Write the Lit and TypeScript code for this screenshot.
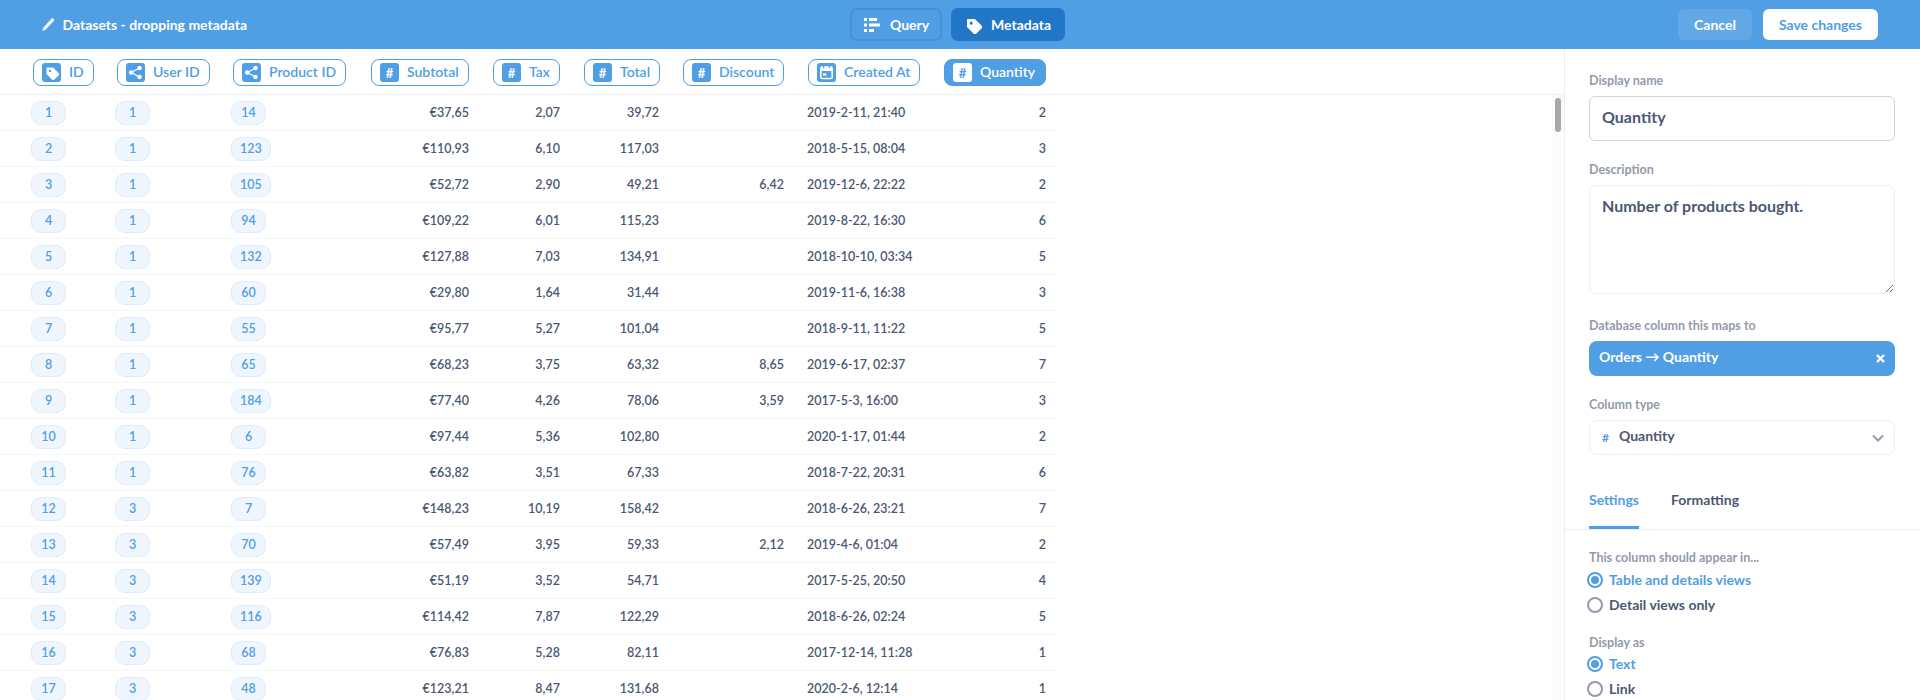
import { LitElement, html, css, svg } from "lit";
import { customElement } from "lit/decorators.js";

type Kind = "tag" | "fk" | "num" | "cal";
const COLS: { name: string; kind: Kind; active?: boolean }[] = [
  { name: "ID", kind: "tag" },
  { name: "User ID", kind: "fk" },
  { name: "Product ID", kind: "fk" },
  { name: "Subtotal", kind: "num" },
  { name: "Tax", kind: "num" },
  { name: "Total", kind: "num" },
  { name: "Discount", kind: "num" },
  { name: "Created At", kind: "cal" },
  { name: "Quantity", kind: "num", active: true },
];

const ROWS: string[][] = [
  ["1", "1", "14", "€37,65", "2,07", "39,72", "", "2019-2-11, 21:40", "2"],
  ["2", "1", "123", "€110,93", "6,10", "117,03", "", "2018-5-15, 08:04", "3"],
  ["3", "1", "105", "€52,72", "2,90", "49,21", "6,42", "2019-12-6, 22:22", "2"],
  ["4", "1", "94", "€109,22", "6,01", "115,23", "", "2019-8-22, 16:30", "6"],
  ["5", "1", "132", "€127,88", "7,03", "134,91", "", "2018-10-10, 03:34", "5"],
  ["6", "1", "60", "€29,80", "1,64", "31,44", "", "2019-11-6, 16:38", "3"],
  ["7", "1", "55", "€95,77", "5,27", "101,04", "", "2018-9-11, 11:22", "5"],
  ["8", "1", "65", "€68,23", "3,75", "63,32", "8,65", "2019-6-17, 02:37", "7"],
  ["9", "1", "184", "€77,40", "4,26", "78,06", "3,59", "2017-5-3, 16:00", "3"],
  ["10", "1", "6", "€97,44", "5,36", "102,80", "", "2020-1-17, 01:44", "2"],
  ["11", "1", "76", "€63,82", "3,51", "67,33", "", "2018-7-22, 20:31", "6"],
  ["12", "3", "7", "€148,23", "10,19", "158,42", "", "2018-6-26, 23:21", "7"],
  ["13", "3", "70", "€57,49", "3,95", "59,33", "2,12", "2019-4-6, 01:04", "2"],
  ["14", "3", "139", "€51,19", "3,52", "54,71", "", "2017-5-25, 20:50", "4"],
  ["15", "3", "116", "€114,42", "7,87", "122,29", "", "2018-6-26, 02:24", "5"],
  ["16", "3", "68", "€76,83", "5,28", "82,11", "", "2017-12-14, 11:28", "1"],
  ["17", "3", "48", "€123,21", "8,47", "131,68", "", "2020-2-6, 12:14", "1"],
];

const tagPath = svg`<g transform="rotate(-45 8 8)"><path fill-rule="evenodd" d="M8 .6 13 5.4V14a1.5 1.5 0 0 1-1.5 1.5h-7A1.5 1.5 0 0 1 3 14V5.4zM8 4.4a1.3 1.3 0 1 0 0 2.6 1.3 1.3 0 0 0 0-2.6z"/></g>`;

@customElement("app-root")
export class AppRoot extends LitElement {
  static styles = css`
    :host {
      display: flex;
      flex-direction: column;
      width: 1920px;
      height: 700px;
      overflow: hidden;
      background: #fff;
      font-family: Lato, "Noto Sans", sans-serif;
      font-weight: 700;
      color: #4c5773;
    }
    .nav {
      flex: none;
      height: 49px;
      background: #509ee3;
      color: #fff;
      display: grid;
      grid-template-columns: 850px 215px 1fr;
      align-items: center;
      font-size: 14px;
    }
    .title {
      display: flex;
      align-items: center;
      gap: 8px;
      padding-left: 42px;
    }
    .title svg { width: 12.5px; height: 13px; fill: #fff; display: block; }
    .switch { display: flex; gap: 9px; }
    .mode {
      height: 33px;
      box-sizing: border-box;
      border-radius: 7px;
      display: flex;
      align-items: center;
      font-size: 14px;
    }
    .mode svg { display: block; fill: #fff; }
    .mode.query {
      width: 92px;
      border: 2px solid #4a90d4;
      padding-left: 12px;
      gap: 10px;
    }
    .mode.query svg { width: 16px; height: 14px; }
    .mode.meta {
      width: 114px;
      background: #2177c6;
      padding-left: 13px;
      gap: 9px;
    }
    .mode.meta svg { width: 18px; height: 18px; }
    .actions {
      display: flex;
      justify-content: flex-end;
      gap: 11px;
      padding-right: 42px;
    }
    .btn {
      height: 31px;
      border-radius: 6px;
      padding: 0 16px;
      font-size: 14px;
      display: flex;
      align-items: center;
    }
    .btn.cancel { background: #62a8e6; color: #fff; }
    .btn.save { background: #fff; color: #509ee3; }

    .main { flex: 1; display: flex; min-height: 0; }
    .data {
      flex: 1;
      display: flex;
      flex-direction: column;
      min-width: 0;
    }
    .cols {
      flex: none;
      height: 46px;
      box-sizing: border-box;
      border-bottom: 1px solid #eeeeee;
      padding-top: 10px;
    }
    .grid {
      display: grid;
      grid-template-columns: 60px 92px 114px 98px 67px 75px 101px 112px 102px;
      column-gap: 24px;
      padding: 0 10px 0 33px;
      width: 1056px;
      box-sizing: border-box;
    }
    .hcol {
      justify-self: start;
      height: 27px;
      box-sizing: border-box;
      border: 1px solid #509ee3;
      border-radius: 8px;
      padding: 0 9px 0 8px;
      display: flex;
      align-items: center;
      gap: 8px;
      color: #509ee3;
      font-size: 14px;
      font-weight: 600;
      white-space: nowrap;
    }
    .hcol span:last-child { margin-top: -2px; }
    .hcol.on { background: #509ee3; color: #fff; width: 102px; }
    .ico {
      flex: none;
      width: 19px;
      height: 19px;
      border-radius: 3px;
      background: #509ee3;
      color: #fff;
      display: flex;
      align-items: center;
      justify-content: center;
      font-size: 13px;
      font-weight: 700;
      margin: 0 !important;
    }
    .on .ico { background: #fff; color: #509ee3; }
    .ico svg { width: 15px; height: 15px; fill: #fff; display: block; }
    .ico svg.full { width: 19px; height: 19px; }
    .body { flex: 1; display: flex; min-height: 0; }
    .rows { flex: 1; min-width: 0; overflow: hidden; }
    .row {
      height: 36px;
      box-sizing: border-box;
      border-bottom: 1px solid #f6f6f6;
      align-items: center;
      font-size: 12.5px;
      font-weight: 600;
      white-space: nowrap;
    }
    .r { text-align: right; }
    .d { margin-left: -1px; }
    .pk {
      justify-self: start;
      margin-left: -2px;
      height: 24px;
      min-width: 35px;
      box-sizing: border-box;
      padding: 0 8px;
      border: 1px solid #dfebf8;
      border-radius: 10px;
      background: #f0f6fd;
      color: #509ee3;
      display: flex;
      align-items: center;
      justify-content: center;
    }
    .track {
      flex: none;
      width: 12px;
      background: #fbfbfb;
      padding: 3px 3px 0;
      box-sizing: border-box;
    }
    .thumb {
      width: 6px;
      height: 34px;
      border-radius: 3px;
      background: #a8a8a8;
    }

    .side {
      flex: none;
      width: 356px;
      box-sizing: border-box;
      border-left: 1px solid #eeeeee;
      padding: 23px 25px 0 24px;
      overflow: hidden;
      font-size: 14px;
    }
    .lab {
      display: block;
      height: 16px;
      box-sizing: border-box;
      padding-top: 1px;
      line-height: 16px;
      font-size: 12.5px;
      color: #949aab;
      margin-bottom: 8px;
    }
    input, textarea {
      display: block;
      width: 100%;
      box-sizing: border-box;
      font: inherit;
      font-size: 16px;
      color: #4c5773;
      background: #fff;
      border-radius: 6px;
      outline: none;
      margin: 0;
    }
    input {
      height: 45px;
      border: 1px solid #d2d4d9;
      padding: 0 12px 5px;
    }
    textarea {
      height: 109px;
      border: 1px solid #eeeeee;
      padding: 10px 12px;
      resize: vertical;
    }
    .chip {
      height: 35px;
      box-sizing: border-box;
      border-radius: 8px;
      background: #509ee3;
      color: #fff;
      padding: 0 10px 4px 10px;
      display: flex;
      align-items: center;
      justify-content: space-between;
    }
    .chip svg { width: 9px; height: 9px; stroke: #fff; stroke-width: 2.4; display: block; margin-top: 4px; }
    .select {
      height: 35px;
      box-sizing: border-box;
      border: 1px solid #eeeeee;
      border-radius: 8px;
      padding: 0 10px 4px 12px;
      display: flex;
      align-items: center;
      gap: 8px;
    }
    .select .h { color: #509ee3; font-size: 12px; width: 9px; margin-top: 4px; }
    .select svg { margin-left: auto; margin-top: 4px; width: 12px; height: 8px; fill: none; stroke: #949aab; stroke-width: 2; display: block; }
    .mt20 { margin-top: 20px; }
    .mt23 { margin-top: 23px; }
    .tabs {
      margin: 35px -25px 0 -24px;
      padding: 0 25px 0 24px;
      height: 40px;
      box-sizing: border-box;
      border-bottom: 1px solid #eeeeee;
      display: flex;
      gap: 32px;
    }
    .tab { height: 39px; line-height: 20px; box-sizing: border-box; }
    .tab.on { color: #509ee3; border-bottom: 3px solid #509ee3; }
    .radio {
      display: flex;
      align-items: center;
      gap: 6px;
      height: 20px;
      margin: 5px 0 0 -2px;
    }
    .radio span:last-child { margin-top: -2px; }
    .dot {
      flex: none;
      width: 16px;
      height: 16px;
      box-sizing: border-box;
      border: 2px solid #949aab;
      border-radius: 50%;
      display: flex;
      align-items: center;
      justify-content: center;
      margin-top: -1px;
    }
    .radio.on { color: #509ee3; }
    .radio.on .dot { border-color: #509ee3; }
    .radio.on .dot::after {
      content: "";
      width: 8px;
      height: 8px;
      border-radius: 50%;
      background: #509ee3;
    }
    .l1 { margin-top: 19px; margin-bottom: 1px; }
    .l2 { margin-top: 19px; margin-bottom: -1px; }
  `;

  private icon(kind: Kind) {
    if (kind === "num") return html`<span class="ico">#</span>`;
    if (kind === "tag")
      return html`<span class="ico"><svg viewBox="0 0 16 16">${tagPath}</svg></span>`;
    if (kind === "fk")
      return html`<span class="ico"><svg viewBox="0 0 16 16">
        <circle cx="12.3" cy="3.2" r="2.4"></circle>
        <circle cx="3.4" cy="8" r="2.4"></circle>
        <circle cx="12.3" cy="12.8" r="2.4"></circle>
        <path d="M12.3 3.2 3.4 8l8.9 4.8" fill="none" stroke="#fff" stroke-width="1.2"></path>
      </svg></span>`;
    return html`<span class="ico"><svg class="full" viewBox="0 0 19 19">
      <rect x="3" y="3.2" width="13" height="13" rx="2.2"></rect>
      <rect x="4.6" y="8" width="9.8" height="6.8" fill="#509ee3"></rect>
      <rect x="6" y="10.4" width="3.4" height="2.2"></rect>
      <rect x="6" y="2.4" width="1.2" height="2.6" fill="#509ee3"></rect>
      <rect x="11.8" y="2.4" width="1.2" height="2.6" fill="#509ee3"></rect>
    </svg></span>`;
  }

  render() {
    return html`
      <div class="nav">
        <div class="title">
          <svg viewBox="0 0 12 13"><path d="M9.4.4a1 1 0 0 1 1.4 0l.9.9a1 1 0 0 1 0 1.4L3.4 11.5 0 13l1.2-3.6z"></path></svg>
          <span>Datasets - dropping metadata</span>
        </div>
        <div class="switch">
          <div class="mode query">
            <svg viewBox="0 0 16 14">
              <rect width="3" height="3"></rect><rect x="5" width="8" height="3"></rect>
              <rect y="5.5" width="3" height="3"></rect><rect x="5" y="5.5" width="11" height="3"></rect>
              <rect y="11" width="3" height="3"></rect><rect x="5" y="11" width="5" height="3"></rect>
            </svg>
            <span>Query</span>
          </div>
          <div class="mode meta">
            <svg viewBox="0 0 16 16">${tagPath}</svg>
            <span>Metadata</span>
          </div>
        </div>
        <div class="actions">
          <div class="btn cancel">Cancel</div>
          <div class="btn save">Save changes</div>
        </div>
      </div>
      <div class="main">
        <div class="data">
          <div class="cols">
            <div class="grid">
              ${COLS.map(
                (c) => html`<div class="hcol ${c.active ? "on" : ""}">${this.icon(c.kind)}<span>${c.name}</span></div>`
              )}
            </div>
          </div>
          <div class="body">
            <div class="rows">
              ${ROWS.map(
                (r) => html`<div class="row grid">
                  <div class="pk">${r[0]}</div>
                  <div class="pk">${r[1]}</div>
                  <div class="pk">${r[2]}</div>
                  <div class="r">${r[3]}</div>
                  <div class="r">${r[4]}</div>
                  <div class="r">${r[5]}</div>
                  <div class="r">${r[6]}</div>
                  <div class="d">${r[7]}</div>
                  <div class="r">${r[8]}</div>
                </div>`
              )}
            </div>
            <div class="track"><div class="thumb"></div></div>
          </div>
        </div>
        <div class="side">
          <label class="lab">Display name</label>
          <input value="Quantity" />
          <label class="lab mt20">Description</label>
          <textarea .value=${"Number of products bought."}></textarea>
          <label class="lab mt23">Database column this maps to</label>
          <div class="chip">
            <span>Orders → Quantity</span>
            <svg viewBox="0 0 9 9"><path d="M1 1l7 7M8 1 1 8"></path></svg>
          </div>
          <label class="lab mt20">Column type</label>
          <div class="select">
            <span class="h">#</span><span>Quantity</span>
            <svg viewBox="0 0 12 8"><path d="M1 1.5l5 5 5-5"></path></svg>
          </div>
          <div class="tabs">
            <div class="tab on">Settings</div>
            <div class="tab">Formatting</div>
          </div>
          <label class="lab l1">This column should appear in...</label>
          <div class="radio on"><span class="dot"></span><span>Table and details views</span></div>
          <div class="radio"><span class="dot"></span><span>Detail views only</span></div>
          <label class="lab l2">Display as</label>
          <div class="radio on"><span class="dot"></span><span>Text</span></div>
          <div class="radio"><span class="dot"></span><span>Link</span></div>
        </div>
      </div>
    `;
  }
}
